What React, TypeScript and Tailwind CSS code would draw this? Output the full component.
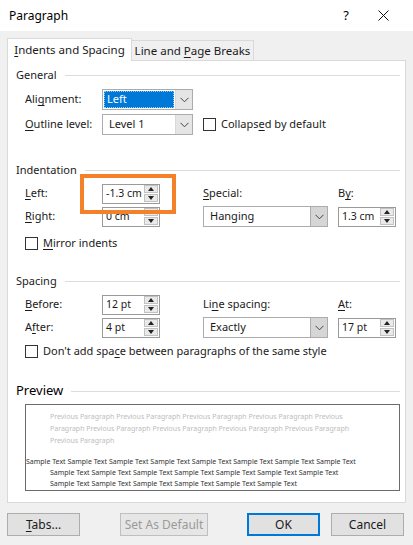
import React from "react";

const U = ({ children }: { children: React.ReactNode }) => (
  <span className="underline underline-offset-[2px] decoration-[1px]">{children}</span>
);

const Chevron = () => (
  <svg width="9" height="6" viewBox="0 0 9 6" fill="none">
    <polyline points="0.5,0.8 4.5,4.8 8.5,0.8" stroke="#444" strokeWidth="1" />
  </svg>
);

const Tri = ({ up }: { up?: boolean }) => (
  <svg width="6" height="4" viewBox="0 0 6 4">
    <polygon points={up ? "3,0 6,4 0,4" : "0,0 6,0 3,4"} fill="#222" />
  </svg>
);

function Spin({ value }: { value: string }) {
  return (
    <div className="flex h-[20px] w-[58px] items-center border border-[#9a9a9a] bg-white pl-[3px] pr-[1px]">
      <span className="whitespace-nowrap text-[10.5px] leading-none">{value}</span>
      <div className="flex-1" />
      <div className="flex shrink-0 flex-col gap-[1px]">
        <div className="flex h-[8px] w-[14px] items-center justify-center border border-[#c2c2c2] bg-[#e9e9e9]">
          <Tri up />
        </div>
        <div className="flex h-[8px] w-[14px] items-center justify-center border border-[#c2c2c2] bg-[#e9e9e9]">
          <Tri />
        </div>
      </div>
    </div>
  );
}

function Select({
  value,
  w,
  highlight,
  dark,
}: {
  value: string;
  w: string;
  highlight?: boolean;
  dark?: boolean;
}) {
  return (
    <div className={`flex h-[21px] items-stretch border border-[#acacac] bg-white ${w}`}>
      <div className="flex flex-1 items-center p-[1px]">
        {highlight ? (
          <div className="flex h-full w-full items-center border border-dotted border-[#99c9ef] bg-[#0078d7] pl-[2px] text-white">
            {value}
          </div>
        ) : (
          <span className="pl-[5px]">{value}</span>
        )}
      </div>
      <div
        className={`flex w-[17px] items-center justify-center border-l ${
          dark ? "border-[#acacac] bg-[#d6d6d6]" : "border-[#d9d9d9] bg-[#e5e5e5]"
        }`}
      >
        <Chevron />
      </div>
    </div>
  );
}

const Check = () => <div className="h-[13px] w-[13px] border border-[#333] bg-white" />;

function Heading({ children, big }: { children: React.ReactNode; big?: boolean }) {
  return (
    <div className="flex h-[16px] items-center gap-[8px]">
      <span className={big ? "text-[13px] text-black" : ""}>{children}</span>
      <div className="h-px flex-1 bg-[#dcdcdc]" />
    </div>
  );
}

const Btn = ({
  children,
  w,
  disabled,
  primary,
}: {
  children: React.ReactNode;
  w: string;
  disabled?: boolean;
  primary?: boolean;
}) => (
  <div
    className={`flex h-[23px] items-center justify-center ${w} ${
      primary
        ? "border-2 border-[#0078d7] bg-[#e1e1e1]"
        : disabled
        ? "border border-[#bfbfbf] bg-[#e6e6e6] text-[#9a9a9a]"
        : "border border-[#adadad] bg-[#e1e1e1]"
    }`}
  >
    {children}
  </div>
);

const prev = [
  "Previous Paragraph Previous Paragraph Previous Paragraph Previous Paragraph Previous",
  "Paragraph Previous Paragraph Previous Paragraph Previous Paragraph Previous Paragraph",
  "Previous Paragraph",
];

export default function App() {
  return (
    <div
      className="flex h-[545px] w-[413px] flex-col bg-[#f0f0f0] text-[11px] text-[#1a1a1a]"
      style={{ fontFamily: '"Noto Sans", sans-serif' }}
    >
      {/* title bar */}
      <div className="flex h-[31px] items-center bg-white pl-[9px]">
        <span className="flex-1 text-[12px] text-black">Paragraph</span>
        <span className="w-[14px] text-center text-[13px] text-black">?</span>
        <div className="flex w-[60px] justify-center">
          <svg width="11" height="11" viewBox="0 0 11 11">
            <path d="M0.5 0.5L10.5 10.5M10.5 0.5L0.5 10.5" stroke="#111" strokeWidth="1" />
          </svg>
        </div>
      </div>

      <div className="flex flex-1 flex-col px-[7px] pt-[7px]">
        {/* tabs */}
        <div className="flex items-end">
          <div className="relative z-10 -mb-px flex h-[23px] w-[125px] items-center justify-center border border-b-0 border-[#d9d9d9] bg-white text-[11.5px]">
            <span className="whitespace-nowrap">
              <U>I</U>ndents and Spacing
            </span>
          </div>
          <div className="flex h-[20px] w-[122px] items-center justify-center border border-b-0 border-l-0 border-[#d9d9d9] bg-[#f0f0f0] text-[11.5px]">
            <span className="whitespace-nowrap">
              Line and <U>P</U>age Breaks
            </span>
          </div>
        </div>

        {/* panel */}
        <div className="relative flex h-[443px] flex-col border border-[#d9d9d9] bg-white pl-[8px] pr-[5px] pt-[6px]">
          <Heading>General</Heading>
          <div className="mt-[6px] flex flex-col gap-[4px] pl-[9px]">
            <div className="flex h-[21px] items-center">
              <span className="w-[77px]">
                Ali<U>g</U>nment:
              </span>
              <Select value="Left" w="w-[91px]" highlight />
            </div>
            <div className="flex h-[21px] items-center">
              <span className="w-[77px]">
                <U>O</U>utline level:
              </span>
              <Select value="Level 1" w="w-[91px]" />
              <div className="ml-[10px] flex items-center gap-[5px]">
                <Check />
                <span>
                  Collaps<U>e</U>d by default
                </span>
              </div>
            </div>
          </div>

          <div className="mt-[27px]">
            <Heading>Indentation</Heading>
          </div>
          <div className="mt-[5px] grid grid-cols-[77px_58px_43px_125px_10px_58px] grid-rows-[21px_21px] items-center gap-y-[2px] pl-[9px]">
            <span>
              <U>L</U>eft:
            </span>
            <Spin value="-1.3 cm" />
            <span />
            <span>
              <U>S</U>pecial:
            </span>
            <span />
            <span>
              B<U>y</U>:
            </span>
            <span>
              <U>R</U>ight:
            </span>
            <Spin value="0 cm" />
            <span />
            <Select value="Hanging" w="w-[125px]" dark />
            <span />
            <Spin value="1.3 cm" />
          </div>
          <div className="mt-[8px] flex h-[16px] items-center gap-[5px] pl-[9px]">
            <Check />
            <span>
              <U>M</U>irror indents
            </span>
          </div>

          <div className="mt-[22px]">
            <Heading>Spacing</Heading>
          </div>
          <div className="mt-[5px] grid grid-cols-[77px_58px_43px_125px_10px_58px] grid-rows-[21px_21px] items-center gap-y-[2px] pl-[9px]">
            <span>
              <U>B</U>efore:
            </span>
            <Spin value="12 pt" />
            <span />
            <span>
              Li<U>n</U>e spacing:
            </span>
            <span />
            <span>
              <U>A</U>t:
            </span>
            <span>
              A<U>f</U>ter:
            </span>
            <Spin value="4 pt" />
            <span />
            <Select value="Exactly" w="w-[125px]" dark />
            <span />
            <Spin value="17 pt" />
          </div>
          <div className="mt-[5px] flex h-[16px] items-center gap-[5px] pl-[9px]">
            <Check />
            <span>
              Don't add spa<U>c</U>e between paragraphs of the same style
            </span>
          </div>

          <div className="mt-[24px]">
            <Heading big>Preview</Heading>
          </div>
          <div className="ml-[9px] mt-[5px] flex h-[87px] flex-col border border-[#6b6b6b] pt-[6px] text-[7px]">
            <div className="flex flex-col pl-[24px] leading-[12px] text-[#bdbdbd]">
              {prev.map((l) => (
                <span key={l} className="whitespace-nowrap">
                  {l}
                </span>
              ))}
            </div>
            <div className="mt-[9px] flex flex-col leading-[11px] text-[#333]">
              <span className="whitespace-nowrap">
                Sample Text Sample Text Sample Text Sample Text Sample Text Sample Text Sample Text Sample Text
              </span>
              <span className="whitespace-nowrap pl-[24px]">
                Sample Text Sample Text Sample Text Sample Text Sample Text Sample Text Sample Text
              </span>
              <span className="whitespace-nowrap pl-[24px]">
                Sample Text Sample Text Sample Text Sample Text Sample Text Sample Text
              </span>
            </div>
          </div>

          {/* highlight around Left value */}
          <div className="absolute left-[72px] top-[113px] h-[40px] w-[96px] border-[4px] border-[#f5802a]" />
        </div>

        {/* buttons */}
        <div className="mt-[10px] flex items-center text-[12px]">
          <Btn w="w-[73px]">
            <span>
              <U>T</U>abs...
            </span>
          </Btn>
          <div className="ml-[40px]">
            <Btn w="w-[88px]" disabled>
              Set As Default
            </Btn>
          </div>
          <div className="ml-[39px]">
            <Btn w="w-[73px]" primary>
              OK
            </Btn>
          </div>
          <div className="ml-[11px]">
            <Btn w="w-[73px]">Cancel</Btn>
          </div>
        </div>
      </div>
    </div>
  );
}
